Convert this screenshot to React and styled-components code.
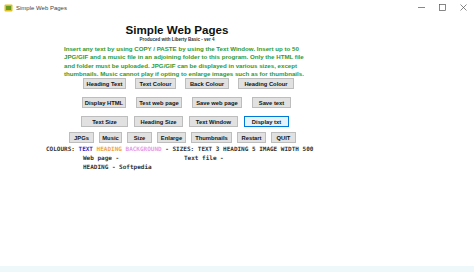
import React from "react";
import styled, { createGlobalStyle } from "styled-components";

const GlobalStyle = createGlobalStyle`
  html, body {
    margin: 0;
    padding: 0;
    background: #ffffff;
  }
  body {
    font-family: "Liberation Sans", Arial, sans-serif;
  }
`;

const Window = styled.div`
  width: 474px;
  height: 272px;
  display: flex;
  flex-direction: column;
  background: #ffffff;
  overflow: hidden;
`;

const TitleBar = styled.div`
  height: 15px;
  display: flex;
  align-items: center;
  padding-left: 4px;
  gap: 3px;
  flex-shrink: 0;
`;

const AppName = styled.span`
  font-size: 6px;
  color: #444;
  flex: 1;
`;

const Controls = styled.div`
  display: flex;
  align-items: center;
`;

const ControlBtn = styled.div`
  width: 21px;
  height: 15px;
  display: flex;
  align-items: center;
  justify-content: center;
`;

const Body = styled.div`
  flex: 1;
  display: flex;
  flex-direction: column;
  padding-left: 46px;
  padding-top: 8px;
`;

const Title = styled.h1`
  margin: 0;
  width: 262px;
  text-align: center;
  font-size: 11.6px;
  line-height: 13px;
  font-weight: bold;
  color: #111;
`;

const Subtitle = styled.div`
  width: 262px;
  text-align: center;
  font-size: 4.5px;
  line-height: 6px;
  font-weight: bold;
  color: #333;
  margin-top: 1px;
`;

const Blurb = styled.p`
  margin: 2px 0 0 18px;
  font-size: 6.15px;
  line-height: 8.3px;
  font-weight: bold;
  color: #2f9a2f;
  white-space: nowrap;
`;

const ButtonRow = styled.div`
  display: flex;
  gap: ${(p) => p.$gap || 8}px;
  margin-left: ${(p) => p.$left}px;
  margin-top: ${(p) => p.$top}px;
`;

const Button = styled.button`
  width: ${(p) => p.$w}px;
  height: 11px;
  padding: 0;
  font-family: "Liberation Sans", Arial, sans-serif;
  font-size: 5.8px;
  font-weight: bold;
  color: #111;
  background: ${(p) => (p.$focus ? "#e5f1fb" : "#e1e1e1")};
  border: 1px solid ${(p) => (p.$focus ? "#0078d7" : "#bdbdbd")};
  border-radius: 0;
  white-space: nowrap;
`;

const Status = styled.div`
  font-family: "DejaVu Sans Mono", monospace;
  font-size: 6px;
  font-weight: bold;
  line-height: 9px;
  color: #333;
  white-space: nowrap;
`;

const StatusLine = styled(Status)`
  margin-top: 1px;
`;

const Coloured = styled.span`
  color: ${(p) => p.$c};
`;

const InfoGrid = styled.div`
  display: grid;
  grid-template-columns: 101px auto;
  margin-left: 37px;
`;

const BottomEdge = styled.div`
  height: 6px;
  background: #eef8fa;
  flex-shrink: 0;
`;

function AppIcon() {
  return (
    <svg width="9" height="8" viewBox="0 0 9 8">
      <rect x="0.5" y="0.5" width="8" height="7" rx="1" fill="#e0c020" />
      <rect x="2" y="2" width="5" height="4" fill="#6a9a20" />
    </svg>
  );
}

const rows = [
  { left: 37, gap: 9, top: 0, items: [["Heading Text", 43], ["Text Colour", 41], ["Back Colour", 44], ["Heading Colour", 56]] },
  { left: 36, gap: 10, top: 8, items: [["Display HTML", 44], ["Test web page", 46], ["Save web page", 50], ["Save text", 39]] },
  { left: 35, gap: 6, top: 8, items: [["Text Size", 47], ["Heading Size", 49], ["Text Window", 49], ["Display txt", 45, true]] },
];

const bottomRow = [
  ["JPGs", 25],
  ["Music", 23],
  ["Size", 25],
  ["Enlarge", 29],
  ["Thumbnails", 41],
  ["Restart", 29],
  ["QUIT", 25],
];

export default function App() {
  return (
    <Window>
      <GlobalStyle />
      <TitleBar>
        <AppIcon />
        <AppName>Simple Web Pages</AppName>
        <Controls>
          <ControlBtn>
            <svg width="7" height="7" viewBox="0 0 7 7">
              <line x1="0" y1="3.5" x2="7" y2="3.5" stroke="#555" strokeWidth="0.7" />
            </svg>
          </ControlBtn>
          <ControlBtn>
            <svg width="7" height="7" viewBox="0 0 7 7">
              <rect x="0.5" y="0.5" width="6" height="6" fill="none" stroke="#555" strokeWidth="0.7" />
            </svg>
          </ControlBtn>
          <ControlBtn>
            <svg width="7" height="7" viewBox="0 0 7 7">
              <path d="M0.5 0.5 L6.5 6.5 M6.5 0.5 L0.5 6.5" stroke="#555" strokeWidth="0.7" />
            </svg>
          </ControlBtn>
        </Controls>
      </TitleBar>
      <Body>
        <Title>Simple Web Pages</Title>
        <Subtitle>Produced with Liberty Basic - ver 4</Subtitle>
        <Blurb>
          Insert any text by using COPY / PASTE by using the Text Window. Insert up to 50
          <br />
          JPG/GIF and a music file in an adjoining folder to this program. Only the HTML file
          <br />
          and folder must be uploaded. JPG/GIF can be displayed in various sizes, except
          <br />
          thumbnails. Music cannot play if opting to enlarge images such as for thumbnails.
        </Blurb>
        {rows.map((row, i) => (
          <ButtonRow key={i} $left={row.left} $gap={row.gap} $top={row.top}>
            {row.items.map(([label, w, focus]) => (
              <Button key={label} $w={w} $focus={focus}>
                {label}
              </Button>
            ))}
          </ButtonRow>
        ))}
        <ButtonRow $left={23} $gap={5} $top={5}>
          {bottomRow.map(([label, w]) => (
            <Button key={label} $w={w}>
              {label}
            </Button>
          ))}
        </ButtonRow>
        <StatusLine>
          COLOURS: <Coloured $c="#2b2bc8">TEXT</Coloured>{" "}
          <Coloured $c="#f2a447">HEADING</Coloured>{" "}
          <Coloured $c="#e79be8">BACKGROUND</Coloured> - SIZES: TEXT 3 HEADING 5 IMAGE WIDTH 500
        </StatusLine>
        <InfoGrid>
          <Status>Web page -</Status>
          <Status>Text file -</Status>
          <Status>HEADING - Softpedia</Status>
        </InfoGrid>
      </Body>
      <BottomEdge />
    </Window>
  );
}
